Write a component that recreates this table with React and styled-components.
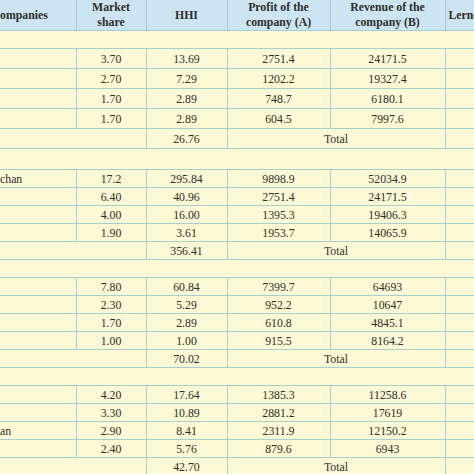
import React from "react";
import styled, { createGlobalStyle } from "styled-components";

const Global = createGlobalStyle`
  html, body {
    margin: 0;
    padding: 0;
    background: #fdf8d6;
    overflow: hidden;
  }
`;

const Frame = styled.div`
  width: 474px;
  height: 474px;
  overflow: hidden;
  background: #fdf8d6;
`;

const Table = styled.table`
  border-collapse: collapse;
  table-layout: fixed;
  width: 520px;
  font-family: "Liberation Serif", "Times New Roman", serif;
  color: #302e2a;
  font-size: 11.8px;
`;

const HeadRow = styled.tr`
  height: 30px;
  background: #cde4f2;
`;

const HeadCell = styled.th`
  font-weight: bold;
  font-size: 11.8px;
  line-height: 15px;
  padding: 0;
  text-align: ${(p) => (p.$left ? "left" : "center")};
  border-right: 1px solid #a2cbe0;
  border-bottom: 1px solid #a2cfd3;
  vertical-align: middle;
  white-space: nowrap;
  overflow: hidden;
`;

const Row = styled.tr`
  height: ${(p) => p.$h}px;
`;

const Cell = styled.td`
  padding: 0;
  text-align: ${(p) => (p.$left ? "left" : "center")};
  border-right: ${(p) => (p.$noRight ? "none" : "1px solid #a3d1cd")};
  border-bottom: 1px solid #a3d1cd;
  vertical-align: middle;
  white-space: nowrap;
  overflow: hidden;
  line-height: 14px;
`;

const SectionCell = styled.td`
  padding: 0;
  border-bottom: 1px solid #a3d1cd;
`;

const groups = [
  {
    sectionH: 18,
    rowH: 20,
    rows: [
      ["", "3.70", "13.69", "2751.4", "24171.5"],
      ["", "2.70", "7.29", "1202.2", "19327.4"],
      ["", "1.70", "2.89", "748.7", "6180.1"],
      ["", "1.70", "2.89", "604.5", "7997.6"],
    ],
    total: "26.76",
  },
  {
    sectionH: 21,
    rowH: 18,
    rows: [
      ["chan", "17.2", "295.84", "9898.9", "52034.9"],
      ["", "6.40", "40.96", "2751.4", "24171.5"],
      ["", "4.00", "16.00", "1395.3", "19406.3"],
      ["", "1.90", "3.61", "1953.7", "14065.9"],
    ],
    total: "356.41",
  },
  {
    sectionH: 18,
    rowH: 18,
    rows: [
      ["", "7.80", "60.84", "7399.7", "64693"],
      ["", "2.30", "5.29", "952.2", "10647"],
      ["", "1.70", "2.89", "610.8", "4845.1"],
      ["", "1.00", "1.00", "915.5", "8164.2"],
    ],
    total: "70.02",
  },
  {
    sectionH: 18,
    rowH: 18,
    rows: [
      ["", "4.20", "17.64", "1385.3", "11258.6"],
      ["", "3.30", "10.89", "2881.2", "17619"],
      ["an", "2.90", "8.41", "2311.9", "12150.2"],
      ["", "2.40", "5.76", "879.6", "6943"],
    ],
    total: "42.70",
  },
];

export default function App() {
  return (
    <Frame>
      <Global />
      <Table>
        <colgroup>
          <col style={{ width: 76 }} />
          <col style={{ width: 70 }} />
          <col style={{ width: 81 }} />
          <col style={{ width: 103 }} />
          <col style={{ width: 115 }} />
          <col style={{ width: 75 }} />
        </colgroup>
        <thead>
          <HeadRow>
            <HeadCell $left>ompanies</HeadCell>
            <HeadCell>
              Market
              <br />
              share
            </HeadCell>
            <HeadCell>HHI</HeadCell>
            <HeadCell>
              Profit of the
              <br />
              company (A)
            </HeadCell>
            <HeadCell>
              Revenue of the
              <br />
              company (B)
            </HeadCell>
            <HeadCell $left>&nbsp;Lerner index</HeadCell>
          </HeadRow>
        </thead>
        <tbody>
          {groups.map((g, gi) => (
            <React.Fragment key={gi}>
              <Row $h={g.sectionH}>
                <SectionCell colSpan={6} />
              </Row>
              {g.rows.map((r, ri) => (
                <Row key={ri} $h={g.rowH}>
                  <Cell $left>{r[0]}</Cell>
                  <Cell>{r[1]}</Cell>
                  <Cell>{r[2]}</Cell>
                  <Cell>{r[3]}</Cell>
                  <Cell>{r[4]}</Cell>
                  <Cell $noRight />
                </Row>
              ))}
              <Row $h={g.rowH}>
                <Cell colSpan={2} />
                <Cell>{g.total}</Cell>
                <Cell colSpan={2}>Total</Cell>
                <Cell $noRight />
              </Row>
            </React.Fragment>
          ))}
        </tbody>
      </Table>
    </Frame>
  );
}
